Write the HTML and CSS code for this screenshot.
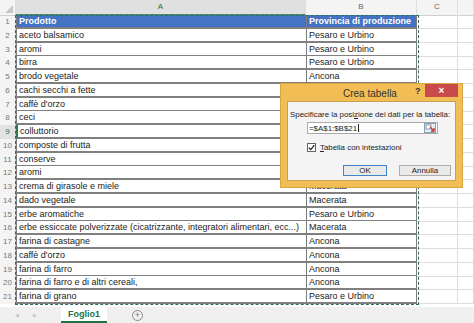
FILE: index.html
```html
<!DOCTYPE html>
<html lang="it">
<head>
    <meta charset="UTF-8">
    <title>Crea tabella</title>
    <link rel="stylesheet" href="styles.css">
</head>
<body>
    <div class="workbook">
        <div class="sheet">
            <div class="row col-heads">
                <div class="corner"><span class="corner-tri"></span></div>
                <div class="head head-sel">A</div>
                <div class="head">B</div>
                <div class="head">C</div>
                <div class="head"></div>
            </div>
            <div id="rows"></div>
        </div>

        <!-- selezione tratteggiata A1:B21 -->
        <div class="ants"></div>

        <div class="tabbar">
            <span class="nav">&#9664;</span>
            <span class="nav">&#9654;</span>
            <span class="tab">Foglio1</span>
            <span class="add">+</span>
        </div>

        <div class="dialog">
            <div class="dlg-title">
                <span class="dlg-name">Crea tabella</span>
                <span class="dlg-help">?</span>
                <span class="dlg-close">&times;</span>
            </div>
            <div class="dlg-body">
                <p class="dlg-label">Specificare la posi<u>z</u>ione dei dati per la tabella:</p>
                <div class="range">
                    <span class="range-text">=$A$1:$B$21<span class="caret"></span></span>
                    <svg class="range-btn" width="12" height="10" viewBox="0 0 12 10">
                        <rect x="0.5" y="0.5" width="11" height="9" fill="#e8eef6" stroke="#8aa0b8"/>
                        <rect x="2" y="2" width="5" height="4" fill="#ffffff" stroke="#6d87a6" stroke-width="0.8"/>
                        <path d="M6 4 L10 8 M7 8 L10 8 L10 5" stroke="#c0392b" stroke-width="1.3" fill="none"/>
                    </svg>
                </div>
                <label class="check">
                    <span class="box">
                        <svg width="7" height="7" viewBox="0 0 7 7"><path d="M0.8 3.6 L2.8 5.6 L6.3 1.2" stroke="#222" stroke-width="1.3" fill="none"/></svg>
                    </span>
                    <span><u>T</u>abella con intestazioni</span>
                </label>
                <div class="buttons">
                    <span class="btn btn-ok">OK</span>
                    <span class="btn">Annulla</span>
                </div>
            </div>
        </div>
    </div>

    <script>
        const dati = [
            ['Prodotto', 'Provincia di produzione'],
            ['aceto balsamico', 'Pesaro e Urbino'],
            ['aromi', 'Pesaro e Urbino'],
            ['birra', 'Pesaro e Urbino'],
            ['brodo vegetale', 'Ancona'],
            ['cachi secchi a fette', 'Pesaro e Urbino'],
            ["caffè d'orzo", 'Ancona'],
            ['ceci', 'Ancona'],
            ['colluttorio', 'Pesaro e Urbino'],
            ['composte di frutta', 'Ancona'],
            ['conserve', 'Ancona'],
            ['aromi', 'Pesaro e Urbino'],
            ['crema di girasole e miele', 'Macerata'],
            ['dado vegetale', 'Macerata'],
            ['erbe aromatiche', 'Pesaro e Urbino'],
            ['erbe essiccate polverizzate (cicatrizzante, integratori alimentari, ecc...)', 'Macerata'],
            ['farina di castagne', 'Ancona'],
            ["caffè d'orzo", 'Ancona'],
            ['farina di farro', 'Ancona'],
            ['farina di farro e di altri cereali,', 'Ancona'],
            ['farina di grano', 'Pesaro e Urbino']
        ];

        const rows = document.getElementById('rows');
        dati.forEach((riga, i) => {
            const row = document.createElement('div');
            row.className = i === 0 ? 'row head-row' : 'row';
            const numClass = i === 8 ? 'num num-sel' : 'num';
            const aClass = i === 8 ? 'cell cell-a active' : 'cell cell-a';
            row.innerHTML = `
                <div class="${numClass}">${i + 1}</div>
                <div class="${aClass}">${riga[0]}</div>
                <div class="cell cell-b">${riga[1]}</div>
                <div class="cell-c"></div>
                <div class="cell-c"></div>
            `;
            rows.appendChild(row);
        });
    </script>
</body>
</html>
```

FILE: styles.css
```css
body {
    margin: 0;
    padding: 0;
    background-color: #ffffff;
    font-family: 'Liberation Sans', Arial, sans-serif;
    color: #222;
    overflow: hidden;
}
.workbook {
    position: relative;
    width: 474px;
    height: 323px;
    overflow: hidden;
}
.sheet {
    font-size: 9px;
}
.row {
    display: grid;
    grid-template-columns: 16px 290px 111px 41px 16px;
    height: 13.75px;
}
.row > div {
    box-sizing: border-box;
}

.col-heads {
    height: 15px;
}
.head {
    background-color: #f4f4f4;
    border-right: 1px solid #dedede;
    border-bottom: 1px solid #d0d0d0;
    font-size: 8px;
    color: #666;
    text-align: center;
    line-height: 14px;
}
.head-sel {
    background-color: #e0e0e0;
    color: #1f6b46;
    border-bottom: 2px solid #4b8a68;
}
.corner {
    position: relative;
    background-color: #f4f4f4;
    border-right: 1px solid #dedede;
    border-bottom: 1px solid #d0d0d0;
}
.corner-tri {
    position: absolute;
    right: 2px;
    bottom: 2px;
    width: 0;
    height: 0;
    border-left: 8px solid transparent;
    border-bottom: 8px solid #c8c8c8;
}

.num {
    background-color: #f4f4f4;
    color: #777;
    font-size: 8px;
    text-align: center;
    border-right: 1px solid #d4d4d4;
    line-height: 13px;
}
.num-sel {
    color: #1f7a4a;
    background-color: #e2e2e2;
}
.cell {
    padding-left: 2px;
    white-space: nowrap;
    line-height: 12px;
    border-left: 1px solid #7c7c7c;
    border-bottom: 2px solid #808080;
    background-color: #ffffff;
}
.cell-a.active {
    border-left: 2px solid #2d7a52;
}
.cell-b {
    border-right: 1px solid #7c7c7c;
}
.cell-c {
    border-bottom: 1px solid #dcdcdc;
    border-right: 1px solid #dcdcdc;
}
.head-row .cell {
    background-color: #4472c4;
    color: #ffffff;
    font-weight: bold;
}

.ants {
    position: absolute;
    left: 15px;
    top: 15px;
    width: 402px;
    height: 288px;
    border: 1.5px dashed #2f6f57;
}

.tabbar {
    position: absolute;
    left: 0;
    right: 0;
    top: 307px;
    bottom: 0;
    background-color: #f0f0f0;
    display: flex;
    align-items: stretch;
    font-size: 5px;
}
.nav {
    color: #c4c4c4;
    display: flex;
    align-items: center;
    margin-left: 15px;
}
.nav + .nav {
    margin-left: 14px;
}
.tab {
    margin-left: 24px;
    width: 46px;
    background-color: #ffffff;
    border-bottom: 2px solid #217346;
    box-sizing: border-box;
    color: #217346;
    font-weight: bold;
    font-size: 9px;
    display: flex;
    align-items: center;
    justify-content: center;
}
.add {
    margin: 3px 0 0 25px;
    width: 9px;
    height: 9px;
    border: 1px solid #8a8a8a;
    border-radius: 50%;
    color: #777;
    font-size: 9px;
    line-height: 9px;
    text-align: center;
}

.dialog {
    position: absolute;
    left: 280px;
    top: 83px;
    width: 183px;
    height: 105px;
    box-sizing: border-box;
    background-color: #f2bd55;
    border: 1px solid #d9a441;
    padding: 0 6px 6px 6px;
    display: flex;
    flex-direction: column;
    font-family: 'Liberation Sans', Arial, sans-serif;
}
.dlg-title {
    height: 17px;
    position: relative;
}
.dlg-name {
    position: absolute;
    left: 56px;
    top: 4px;
    font-size: 10px;
    color: #333;
}
.dlg-help {
    position: absolute;
    left: 128px;
    top: 2px;
    font-size: 9px;
    font-weight: bold;
    color: #333;
}
.dlg-close {
    position: absolute;
    right: -2px;
    top: 0;
    width: 33px;
    height: 13px;
    background-color: #c94a4a;
    color: #ffffff;
    font-size: 10px;
    font-weight: bold;
    line-height: 13px;
    text-align: center;
}
.dlg-body {
    flex: 1;
    background-color: #f4f4f4;
    border: 1px solid #c9a050;
    padding: 8px 0 0 2px;
    font-size: 7.9px;
    color: #222;
}
.dlg-label {
    margin: 0 0 3px 0;
    white-space: nowrap;
}
.range {
    margin-left: 17px;
    width: 131px;
    height: 12px;
    box-sizing: border-box;
    background-color: #ffffff;
    border: 1px solid #a9a9a9;
    display: flex;
    align-items: center;
    justify-content: space-between;
    padding: 0 1px 0 1px;
}
.caret {
    display: inline-block;
    width: 1px;
    height: 8px;
    background-color: #222;
    vertical-align: middle;
    margin-left: 1px;
}
.check {
    display: flex;
    align-items: center;
    gap: 4px;
    margin: 9px 0 0 17px;
}
.box {
    width: 7px;
    height: 7px;
    border: 1px solid #666;
    background-color: #ffffff;
    display: flex;
}
.buttons {
    display: flex;
    gap: 12px;
    margin: 13px 0 0 53px;
}
.btn {
    width: 52px;
    height: 11px;
    box-sizing: border-box;
    border: 1px solid #adadad;
    background-color: #e9e9e9;
    text-align: center;
    line-height: 9px;
}
.btn-ok {
    width: 44px;
    border-color: #3c86c9;
}
```
